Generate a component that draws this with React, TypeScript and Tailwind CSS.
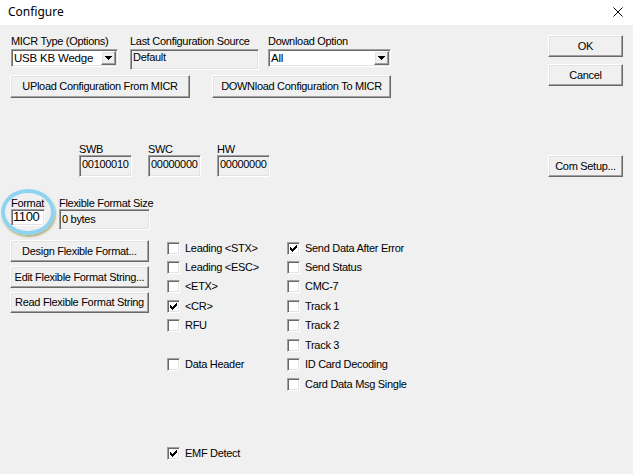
import React from "react";

const raised =
  "bg-[#f0f0f0] border border-t-white border-l-white border-r-[#696969] border-b-[#696969] shadow-[inset_-1px_-1px_0_#a0a0a0,inset_1px_1px_0_#e3e3e3]";
const sunken =
  "border border-t-[#a0a0a0] border-l-[#a0a0a0] border-r-white border-b-white shadow-[inset_1px_1px_0_#696969,inset_-1px_-1px_0_#e3e3e3]";

const CHECK_PIXELS: [number, number, number][] = [
  [6, 0, 1],
  [5, 1, 2],
  [0, 2, 1],
  [4, 2, 3],
  [0, 3, 2],
  [3, 3, 3],
  [0, 4, 5],
  [1, 5, 3],
  [2, 6, 1],
];

function Btn({ label, className }: { label: string; className: string }) {
  return (
    <div className={`${raised} ${className} flex items-center justify-center whitespace-nowrap`}>
      {label}
    </div>
  );
}

function Arrow() {
  return (
    <svg width="7" height="4" viewBox="0 0 7 4" shapeRendering="crispEdges">
      <rect x="0" y="0" width="7" height="1" fill="#000" />
      <rect x="1" y="1" width="5" height="1" fill="#000" />
      <rect x="2" y="2" width="3" height="1" fill="#000" />
      <rect x="3" y="3" width="1" height="1" fill="#000" />
    </svg>
  );
}

function Combo({ value }: { value: string }) {
  return (
    <div className={`${sunken} h-[18px] p-[1px] bg-white flex items-center`}>
      <span className="flex-1 pl-[1px] text-[11.5px] leading-[13px] tracking-[-0.2px]">{value}</span>
      <div className={`${raised} w-[15px] h-[14px] flex items-center justify-center`}>
        <Arrow />
      </div>
    </div>
  );
}

function Check({ label, checked, h }: { label: string; checked?: boolean; h: string }) {
  return (
    <div className={`${h} flex items-center gap-[5px] whitespace-nowrap`}>
      <div className={`${sunken} relative w-[13px] h-[13px] bg-white shrink-0`}>
        {checked && (
          <svg
            className="absolute left-[2px] top-[2px]"
            width="7"
            height="7"
            viewBox="0 0 7 7"
            shapeRendering="crispEdges"
          >
            {CHECK_PIXELS.map(([x, y, w]) => (
              <rect key={`${x}-${y}`} x={x} y={y} width={w} height="1" fill="#000" />
            ))}
          </svg>
        )}
      </div>
      <span>{label}</span>
    </div>
  );
}

export default function App() {
  return (
    <div className="relative w-[633px] h-[474px] flex flex-col bg-[#f0f0f0] text-black text-[11px] leading-[13px] tracking-[-0.3px] font-['Liberation_Sans',Arial,sans-serif] overflow-hidden">
      {/* Title bar */}
      <div className="h-[25px] shrink-0 bg-white flex items-center justify-between pl-[8px] pr-[10px]">
        <span className="text-[12px] tracking-normal font-['Noto_Sans',sans-serif] -mt-[2px]">Configure</span>
        <svg width="10" height="10" viewBox="0 0 10 10" className="-mt-[2px]">
          <path d="M0.5 0.5 L9.5 9.5 M9.5 0.5 L0.5 9.5" stroke="#000" strokeWidth="1" />
        </svg>
      </div>

      <div className="flex-1 flex px-[10px]">
        {/* Main column */}
        <div className="flex-1 flex flex-col">
          {/* Row 1 */}
          <div className="mt-[10px] flex items-start">
            <div className="ml-[1px] w-[107px] flex flex-col">
              <span className="h-[14px] whitespace-nowrap">MICR Type (Options)</span>
              <Combo value="USB KB Wedge" />
            </div>
            <div className="ml-[12px] w-[129px] flex flex-col">
              <span className="h-[14px] whitespace-nowrap">Last Configuration Source</span>
              <div className={`${sunken} h-[21px] pl-[2px] pt-[1px]`}>Default</div>
            </div>
            <div className="ml-[9px] w-[123px] flex flex-col">
              <span className="h-[14px] whitespace-nowrap">Download Option</span>
              <Combo value="All" />
            </div>
          </div>

          {/* Row 2 */}
          <div className="mt-[5px] flex">
            <Btn label="UPload Configuration From MICR" className="w-[180px] h-[23px]" />
            <Btn label="DOWNload Configuration To MICR" className="ml-[22px] w-[179px] h-[23px]" />
          </div>

          {/* Row 3 */}
          <div className="mt-[45px] ml-[69px] flex gap-[16px]">
            {[
              ["SWB", "00100010"],
              ["SWC", "00000000"],
              ["HW", "00000000"],
            ].map(([l, v]) => (
              <div key={l} className="w-[53px] flex flex-col">
                <span className="h-[12px]">{l}</span>
                <div className={`${sunken} h-[22px] pl-[2px] pt-[2px] tracking-[-0.3px]`}>{v}</div>
              </div>
            ))}
          </div>

          {/* Row 4 */}
          <div className="mt-[20px] flex items-start">
            <div className="ml-[1px] w-[34px] flex flex-col">
              <span className="h-[12px] whitespace-nowrap">Format</span>
              <div className={`${sunken} h-[17px] bg-white pl-[1px] text-[13px] leading-[14px] tracking-[-0.4px]`}>
                1100
              </div>
            </div>
            <div className="ml-[14px] w-[91px] flex flex-col">
              <span className="h-[12px] whitespace-nowrap">Flexible Format Size</span>
              <div className={`${sunken} h-[21px] pl-[2px] pt-[3px]`}>0 bytes</div>
            </div>
          </div>

          {/* Row 5 */}
          <div className="mt-[10px] flex items-start">
            <div className="w-[139px] flex flex-col gap-[4px]">
              <Btn label="Design Flexible Format..." className="h-[22px]" />
              <Btn label="Edit Flexible Format String..." className="h-[22px]" />
              <Btn label="Read Flexible Format String" className="h-[21px]" />
            </div>
            <div className="ml-[18px] -mt-[2px] w-[120px] flex flex-col">
              <Check h="h-[20px]" label="Leading <STX>" />
              <Check h="h-[19px]" label="Leading <ESC>" />
              <Check h="h-[19px]" label="<ETX>" />
              <Check h="h-[20px]" label="<CR>" checked />
              <Check h="h-[19px]" label="RFU" />
              <div className="h-[20px]" />
              <Check h="h-[19px]" label="Data Header" />
            </div>
            <div className="-mt-[2px] flex flex-col">
              <Check h="h-[20px]" label="Send Data After Error" checked />
              <Check h="h-[19px]" label="Send Status" />
              <Check h="h-[19px]" label="CMC-7" />
              <Check h="h-[20px]" label="Track 1" />
              <Check h="h-[19px]" label="Track 2" />
              <Check h="h-[20px]" label="Track 3" />
              <Check h="h-[19px]" label="ID Card Decoding" />
              <Check h="h-[20px]" label="Card Data Msg Single" />
            </div>
          </div>

          {/* EMF */}
          <div className="mt-[49px] ml-[157px]">
            <Check h="h-[20px]" label="EMF Detect" checked />
          </div>
        </div>

        {/* Right buttons */}
        <div className="w-[75px] flex flex-col">
          <Btn label="OK" className="mt-[10px] h-[22px]" />
          <Btn label="Cancel" className="mt-[7px] h-[22px]" />
          <Btn label="Com Setup..." className="mt-[69px] h-[22px]" />
        </div>
      </div>

      {/* highlight ring */}
      <div className="absolute left-[1px] top-[189px] w-[54px] h-[46px] rounded-[50%] border-[4px] border-[#8fd3f2] shadow-[1px_2px_2px_rgba(130,130,40,0.55)]" />
    </div>
  );
}
